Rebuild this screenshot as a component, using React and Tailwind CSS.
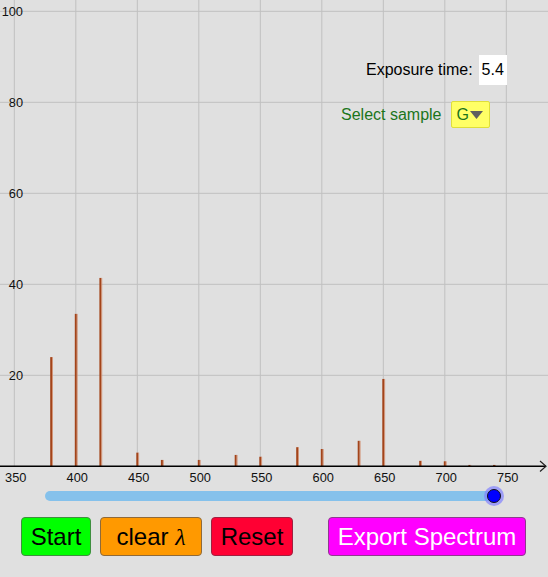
import React from 'react';

const lines = [
  [380, 24.0], [400, 33.5], [420, 41.4], [450, 3.0], [470, 1.4], [500, 1.4],
  [530, 2.5], [550, 2.1], [580, 4.2], [600, 3.8], [630, 5.6], [650, 19.2],
  [680, 1.2], [700, 1.1], [720, 0.3], [740, 0.3],
];

const px = (l) => 14.3 + (l - 350) * 1.23;
const py = (v) => 466.3 - v * 4.55;

const Chart = () => (
  <svg width="548" height="486" className="block">
    {[350, 400, 450, 500, 550, 600, 650, 700, 750].map((l) => (
      <line key={l} x1={px(l)} x2={px(l)} y1="0" y2="466" stroke="#c0c0c0" strokeWidth="1" />
    ))}
    {[100, 80, 60, 40, 20].map((v) => (
      <line key={v} x1="0" x2="548" y1={py(v)} y2={py(v)} stroke="#c0c0c0" strokeWidth="1" />
    ))}
    {lines.map(([l, v]) => (
      <g key={l}>
        <rect x={px(l) - 1} y={py(v)} width="2" height={466.3 - py(v)} fill="#a3441a" />
        <rect x={px(l) + 1} y={py(v)} width="0.8" height={466.3 - py(v)} fill="#d08a6a" />
      </g>
    ))}
    <line x1="0" x2="546" y1="466.3" y2="466.3" stroke="#000" strokeWidth="1.5" />
    <polyline points="540,461 546,466.3 540,471.5" fill="none" stroke="#222" strokeWidth="1.2" />
    {[100, 80, 60, 40, 20].map((v) => (
      <text key={v} x="23" y={py(v) + 4.5} textAnchor="end" fontSize="12.8" fill="#111"
        fontFamily="'Liberation Sans', Arial, sans-serif">{v}</text>
    ))}
    {[350, 400, 450, 500, 550, 600, 650, 700, 750].map((l) => (
      <text key={l} x={px(l) + 1.5} y="482" textAnchor="middle" fontSize="12.8" fill="#111"
        fontFamily="'Liberation Sans', Arial, sans-serif">{l}</text>
    ))}
  </svg>
);

const Button = ({ className, children }) => (
  <button className={`h-[39px] rounded-[4px] border text-[24px] leading-none flex items-center justify-center ${className}`}>
    {children}
  </button>
);

export default function App() {
  return (
    <div className="relative w-[548px] h-[577px] overflow-hidden bg-[#e0e0e0] font-['Liberation_Sans',Arial,sans-serif]">
      <Chart />

      {/* overlay controls */}
      <div className="absolute top-[55px] left-[366px] flex items-center gap-[6px]">
        <span className="text-[16px] text-black">Exposure time:</span>
        <div className="w-[28px] h-[30px] bg-white flex items-center justify-center text-[16px] text-black">5.4</div>
      </div>
      <div className="absolute top-[101px] left-[341px] flex items-center gap-[9px]">
        <span className="text-[16px] text-[#1b751b]">Select sample</span>
        <div className="w-[39px] h-[27px] bg-[#ffff66] border border-[#dede3a] rounded-[2px] flex items-center pl-[5px] gap-[1px]">
          <span className="text-[16px] text-[#1b751b]">G</span>
          <svg width="13" height="8" viewBox="0 0 13 8">
            <polygon points="0,0 13,0 6.5,8" fill="#5f5f5f" />
          </svg>
        </div>
      </div>

      {/* slider */}
      <div className="relative mt-[5px] ml-[45px] w-[449px] h-[10px] rounded-full bg-[#85c1eb]">
        <div className="absolute right-[-10px] top-[-5px] w-[20px] h-[20px] rounded-full bg-[#8080ff]/70 flex items-center justify-center">
          <div className="w-[14px] h-[14px] rounded-full bg-[#0000ff] border border-[#111]" />
        </div>
      </div>

      {/* buttons */}
      <div className="flex mt-[16px] ml-[21px] gap-[9px]">
        <Button className="w-[70px] bg-[#00ff00] border-[#3f8f3f] text-black">Start</Button>
        <Button className="w-[102px] bg-[#ff9900] border-[#8f6a3a] text-black">
          clear&nbsp;<span className="italic font-['Liberation_Serif',serif]">λ</span>
        </Button>
        <Button className="w-[82px] bg-[#ff0033] border-[#a02040] text-black">Reset</Button>
        <Button className="ml-[26px] w-[198px] bg-[#ff00ff] border-[#8f3a8f] text-white">Export Spectrum</Button>
      </div>
    </div>
  );
}
